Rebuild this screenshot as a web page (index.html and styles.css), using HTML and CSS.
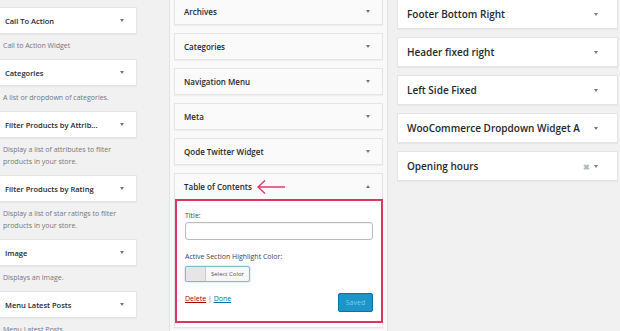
FILE: index.html
```
<!doctype html>
<html lang="en">

<head>
    <meta charset="UTF-8" />
    <meta name="viewport" content="width=device-width, initial-scale=1.0" />
    <title>Widgets</title>
    <link rel="stylesheet" href="styles.css">
</head>

<body>
    <div class="screen">
        <!-- Доступные виджеты -->
        <div class="col-left">
            <div class="avail-widget"><span>Call To Action</span><i class="caret"></i></div>
            <div class="avail-desc">Call to Action Widget</div>
            <div class="avail-widget"><span>Categories</span><i class="caret"></i></div>
            <div class="avail-desc">A list or dropdown of categories.</div>
            <div class="avail-widget"><span>Filter Products by Attrib...</span><i class="caret"></i></div>
            <div class="avail-desc">Display a list of attributes to filter products in your store.</div>
            <div class="avail-widget"><span>Filter Products by Rating</span><i class="caret"></i></div>
            <div class="avail-desc">Display a list of star ratings to filter products in your store.</div>
            <div class="avail-widget"><span>Image</span><i class="caret"></i></div>
            <div class="avail-desc">Displays an image.</div>
            <div class="avail-widget"><span>Menu Latest Posts</span><i class="caret"></i></div>
            <div class="avail-desc">Menu Latest Posts</div>
        </div>

        <!-- Сайдбар -->
        <div class="col-mid">
            <div class="sidebar">
                <div class="widget"><div class="widget-top"><span>Archives</span><i class="caret"></i></div></div>
                <div class="widget"><div class="widget-top"><span>Categories</span><i class="caret"></i></div></div>
                <div class="widget"><div class="widget-top"><span>Navigation Menu</span><i class="caret"></i></div></div>
                <div class="widget"><div class="widget-top"><span>Meta</span><i class="caret"></i></div></div>
                <div class="widget"><div class="widget-top"><span>Qode Twitter Widget</span><i class="caret"></i></div></div>
                <div class="widget open">
                    <div class="widget-top">
                        <span>Table of Contents</span>
                        <svg class="pointer" width="32" height="16" viewBox="0 0 32 16">
                            <path d="M30 8 H3 M10 1.5 L3 8 L10 14.5" fill="none" stroke="#e5376b" stroke-width="1.4" />
                        </svg>
                        <i class="caret up"></i>
                    </div>
                    <div class="widget-inside">
                        <label class="field-label">Title:</label>
                        <input class="field-input" type="text">
                        <label class="field-label spaced">Active Section Highlight Color:</label>
                        <button class="color-btn"><span class="swatch"></span><span class="color-text">Select Color</span></button>
                        <div class="widget-actions">
                            <div class="links"><a class="delete">Delete</a> | <a class="done">Done</a></div>
                            <button class="saved">Saved</button>
                        </div>
                    </div>
                </div>
            </div>
        </div>

        <!-- Другие сайдбары -->
        <div class="col-right">
            <div class="area"><span>Footer Bottom Right</span><i class="caret"></i></div>
            <div class="area"><span>Header fixed right</span><i class="caret"></i></div>
            <div class="area"><span>Left Side Fixed</span><i class="caret"></i></div>
            <div class="area"><span>WooCommerce Dropdown Widget A</span><i class="caret"></i></div>
            <div class="area"><span>Opening hours</span><span class="tools"><span class="x">✖</span><i class="caret"></i></span></div>
        </div>
    </div>
</body>

</html>
```

FILE: styles.css
```
body {
    margin: 0;
    background: #f1f1f1;
    font-family: "Open Sans", "Noto Sans", sans-serif;
    color: #32373c;
    overflow: hidden;
}

.screen {
    display: flex;
    align-items: flex-start;
    height: 331px;
}

.caret {
    width: 0;
    height: 0;
    border-left: 2.5px solid transparent;
    border-right: 2.5px solid transparent;
    border-top: 3px solid #72777c;
    flex-shrink: 0;
}

.caret.up {
    border-top: none;
    border-bottom: 3px solid #72777c;
}

/* левая колонка */
.col-left {
    margin-left: -20px;
    width: 157px;
    padding-top: 7px;
    flex-shrink: 0;
}

.avail-widget {
    display: flex;
    justify-content: space-between;
    align-items: center;
    height: 25px;
    padding: 0 12px 0 24px;
    background: #fff;
    border: 1px solid #e5e5e5;
    box-shadow: 0 1px 1px rgba(0, 0, 0, 0.04);
    font-size: 7.5px;
    font-weight: 600;
    color: #23282d;
    white-space: nowrap;
}

.avail-desc {
    padding: 6px 20px 7px 23px;
    font-size: 7px;
    line-height: 12px;
    color: #72777c;
}

/* средняя колонка */
.col-mid {
    margin-left: 32px;
    width: 219px;
    flex-shrink: 0;
}

.sidebar {
    margin-top: -10px;
    padding: 7px 4px 20px;
    background: #f9f9f9;
    border: 1px solid #e2e2e2;
    display: flex;
    flex-direction: column;
    gap: 8px;
}

.widget {
    background: #fff;
    border: 1px solid #e5e5e5;
    box-shadow: 0 1px 1px rgba(0, 0, 0, 0.04);
}

.widget-top {
    position: relative;
    display: flex;
    justify-content: space-between;
    align-items: center;
    height: 25px;
    padding: 0 12px 0 9px;
    background: #fafafa;
    font-size: 8px;
    font-weight: 600;
    color: #23282d;
}

.pointer {
    position: absolute;
    left: 80px;
    top: 5px;
}

.widget.open {
    padding-bottom: 4px;
}

.widget-inside {
    margin-right: -1px;
    border: 2px solid #dc3560;
    padding: 9px 8px;
    display: flex;
    flex-direction: column;
    background: #fff;
}

.field-label {
    font-size: 7px;
    line-height: 11px;
    color: #444;
}

.field-label.spaced {
    margin-top: 11px;
}

.field-input {
    margin: 1px 0 0;
    height: 18px;
    box-sizing: border-box;
    border: 1px solid #bbb;
    border-radius: 3px;
    background: #fff;
    box-shadow: inset 0 1px 1px rgba(0, 0, 0, 0.05);
}

.color-btn {
    margin-top: 4px;
    display: flex;
    align-items: stretch;
    width: 65px;
    height: 16px;
    padding: 0;
    border: 1px solid #80b8ce;
    border-radius: 2px;
    background: #f7f7f7;
    box-shadow: 0 0 2px rgba(30, 140, 190, 0.4);
    overflow: hidden;
}

.swatch {
    width: 19px;
    background: #e6e6e6;
    border-right: 1px solid #ccc;
}

.color-text {
    flex: 1;
    font-family: "Open Sans", sans-serif;
    font-size: 6px;
    line-height: 14px;
    color: #555;
    text-align: center;
}

.widget-actions {
    margin-top: 11px;
    display: flex;
    justify-content: space-between;
    align-items: flex-start;
}

.links {
    font-size: 7px;
    line-height: 11px;
    color: #72777c;
}

.delete {
    color: #a00;
    text-decoration: underline;
}

.done {
    color: #0073aa;
    text-decoration: underline;
}

.saved {
    width: 35px;
    height: 19px;
    padding: 0;
    border: 1px solid #0073aa;
    border-radius: 2px;
    background: #1d95c9;
    color: #7fcbe8;
    font-family: "Open Sans", sans-serif;
    font-size: 7px;
}

/* правая колонка */
.col-right {
    margin-left: 9px;
    width: 221px;
    flex-shrink: 0;
    margin-top: -1px;
    display: flex;
    flex-direction: column;
    gap: 8px;
}

.area {
    display: flex;
    justify-content: space-between;
    align-items: center;
    height: 28px;
    padding: 0 19px 0 9px;
    background: #fff;
    border: 1px solid #e5e5e5;
    box-shadow: 0 1px 1px rgba(0, 0, 0, 0.04);
    font-size: 10px;
    font-weight: 600;
    color: #23282d;
    white-space: nowrap;
}

.tools {
    display: flex;
    align-items: center;
    gap: 4px;
}

.x {
    font-size: 8px;
    color: #b4b9be;
}
```
